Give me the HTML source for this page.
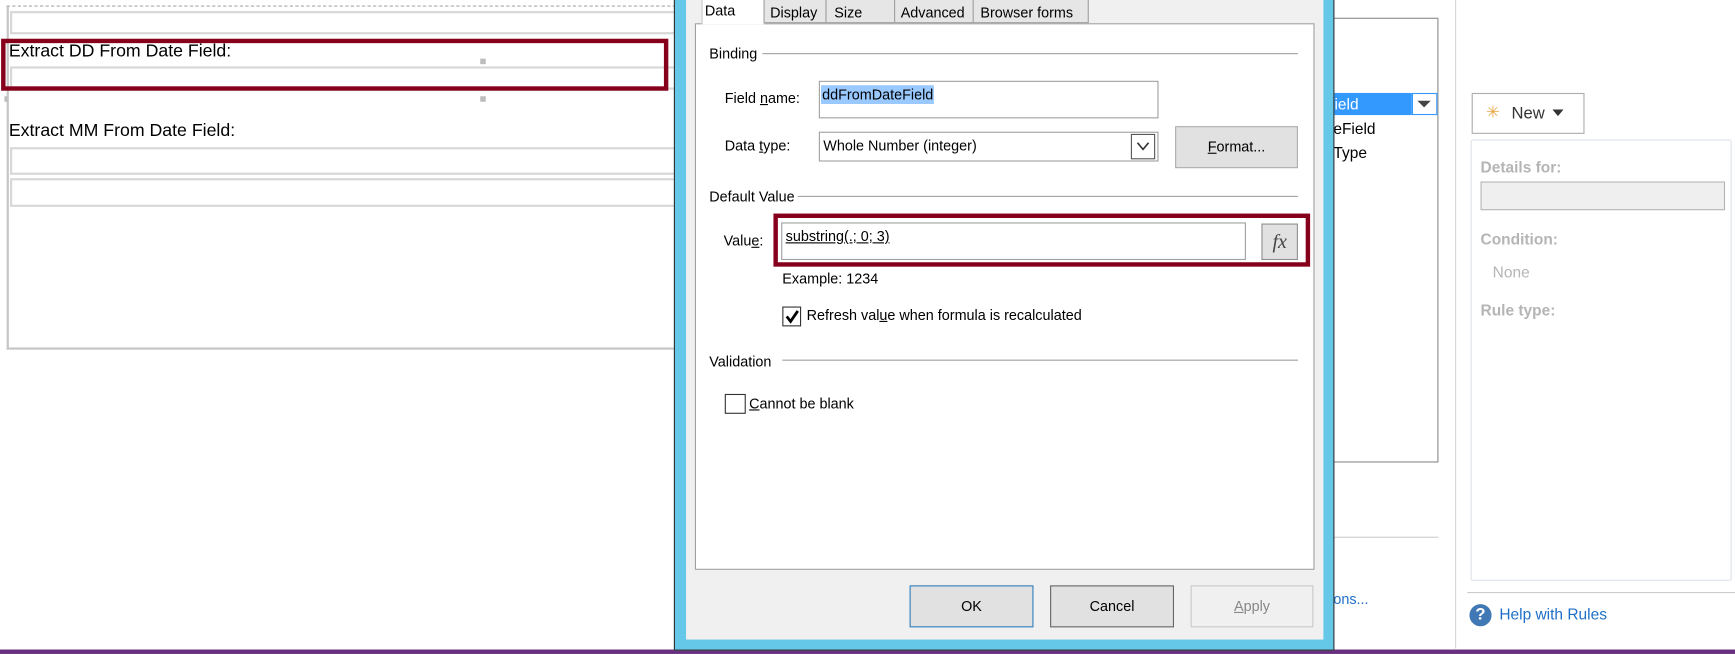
<!DOCTYPE html>
<html><head><meta charset="utf-8"><style>
html,body{margin:0;padding:0;width:1735px;height:654px;overflow:hidden;background:#fff}
#w{position:absolute;left:0;top:0;width:1568px;height:591px;transform:scale(1.10651);transform-origin:0 0;font-family:"Liberation Sans",sans-serif;color:#000}
.a{position:absolute;box-sizing:border-box}
.t{position:absolute;white-space:nowrap;font-size:13px}
.fld{position:absolute;box-sizing:border-box;border:2px solid #d8d8d8;background:#fff}
.hd{position:absolute;width:5px;height:5px;background:#bdbdbd}
.btn{position:absolute;box-sizing:border-box;border:1px solid #adadad;background:#e1e1e1;font-size:13px;text-align:center}
.sec{position:absolute;height:1px;background:#a0a0a0}
u{text-decoration:underline}
</style></head><body><div id="w">
<!-- left form -->
<div class="a" style="left:6px;top:5px;width:610px;height:311px;border:2px solid #c6c6c6;border-top:none"></div>
<div class="a" style="left:6px;top:5px;width:610px;height:0;border-top:1px dashed #aaa"></div>
<div class="fld" style="left:9px;top:10px;width:610px;height:21px"></div>
<div class="t" style="left:8px;top:38px;font-size:16px">Extract DD From Date Field:</div>
<div class="fld" style="left:9px;top:60px;width:610px;height:21px"></div>
<div class="a" style="left:1px;top:35px;width:603px;height:47px;border:4px solid #86001b"></div>
<div class="hd" style="left:434px;top:53px"></div>
<div class="hd" style="left:434px;top:87px"></div>
<div class="hd" style="left:4px;top:87px;width:3px"></div>
<div class="t" style="left:8px;top:110px;font-size:16px">Extract MM From Date Field:</div>
<div class="fld" style="left:9px;top:133px;width:610px;height:25px"></div>
<div class="fld" style="left:9px;top:161px;width:610px;height:26px"></div>

<!-- right background elements -->
<div class="a" style="left:1200px;top:16px;width:100px;height:402px;border:1px solid #8a8a8a;background:#fff"></div>
<div class="a" style="left:1200px;top:84px;width:76px;height:20px;background:#3399ff"></div>
<div class="a" style="left:1276px;top:84px;width:23px;height:20px;border:1px solid #3399ff;background:#fff"></div>
<div class="a" style="left:1281px;top:91px;border-left:6px solid transparent;border-right:6px solid transparent;border-top:6px solid #444"></div>
<div class="t" style="left:1206px;top:86px;color:#fff;font-size:14px">ield</div>
<div class="t" style="left:1205px;top:108px;font-size:14px">eField</div>
<div class="t" style="left:1205px;top:130px;font-size:14px">Type</div>
<div class="a" style="left:1205px;top:485px;width:95px;height:1px;background:#ccc"></div>
<div class="t" style="left:1205px;top:534px;color:#1e6fc8">ons...</div>
<div class="a" style="left:1315px;top:0;width:1px;height:586px;background:#d5d5d5"></div>
<div class="a" style="left:1330px;top:84px;width:102px;height:37px;border:1px solid #adadad;background:#fff"></div>
<div class="t" style="left:1343px;top:92px;font-size:15px;color:#e8a84a">✳</div>
<div class="t" style="left:1366px;top:94px;font-size:15px;color:#333">New</div>
<div class="a" style="left:1403px;top:99px;border-left:5px solid transparent;border-right:5px solid transparent;border-top:6px solid #333"></div>
<div class="a" style="left:1329px;top:126px;width:236px;height:399px;border:1px solid #dde3ea;border-radius:2px"></div>
<div class="t" style="left:1338px;top:143px;font-size:14px;font-weight:bold;color:#b5b5b5">Details for:</div>
<div class="a" style="left:1338px;top:164px;width:221px;height:26px;border:1px solid #b5b5b5;background:#efefef"></div>
<div class="t" style="left:1338px;top:208px;font-size:14px;font-weight:bold;color:#b5b5b5">Condition:</div>
<div class="t" style="left:1349px;top:238px;font-size:14px;color:#b5b5b5">None</div>
<div class="t" style="left:1338px;top:272px;font-size:14px;font-weight:bold;color:#b5b5b5">Rule type:</div>
<div class="a" style="left:1326px;top:535px;width:242px;height:1px;background:#ccc"></div>
<div class="a" style="left:1328px;top:546px;width:20px;height:20px;border-radius:50%;background:#3f78b4;color:#fff;font-weight:bold;font-size:15px;text-align:center;line-height:20px">?</div>
<div class="t" style="left:1355px;top:547px;color:#1e6fc8;font-size:14px">Help with Rules</div>
<div class="a" style="left:0;top:587px;width:1568px;height:4px;background:#68307e"></div>

<!-- dialog -->
<div class="a" style="left:609px;top:-2px;width:597px;height:590px;border:1px solid #333;background:#65c8e8"></div>
<div class="a" style="left:620px;top:-2px;width:576px;height:580px;background:#f0f0f0"></div>
<div class="a" style="left:628px;top:21px;width:560px;height:494px;border:1px solid #a0a0a0;background:#fff"></div>
<div class="a" style="left:634px;top:-2px;width:57px;height:24px;border:1px solid #c8c8c8;border-bottom:none;background:#fff"></div>
<div class="t" style="left:637px;top:2px">Data</div>
<div class="a" style="left:690px;top:-2px;width:57px;height:23px;border:1px solid #a0a0a0;background:#e6e6e6"></div><div class="t" style="left:696px;top:4px">Display</div>
<div class="a" style="left:746px;top:-2px;width:63px;height:23px;border:1px solid #a0a0a0;background:#e6e6e6"></div><div class="t" style="left:754px;top:4px">Size</div>
<div class="a" style="left:808px;top:-2px;width:72px;height:23px;border:1px solid #a0a0a0;background:#e6e6e6"></div><div class="t" style="left:814px;top:4px">Advanced</div>
<div class="a" style="left:879px;top:-2px;width:105px;height:23px;border:1px solid #a0a0a0;background:#e6e6e6"></div><div class="t" style="left:886px;top:4px">Browser forms</div>

<div class="t" style="left:641px;top:41px">Binding</div><div class="sec" style="left:689px;top:48px;width:484px"></div>
<div class="t" style="left:655px;top:81px">Field <u>n</u>ame:</div>
<div class="a" style="left:740px;top:73px;width:307px;height:34px;border:1px solid #a0a0a0;background:#fff"></div>
<div class="t" style="left:742px;top:77px;background:#99c9ff;padding:1px 1px">ddFromDateField</div>
<div class="t" style="left:655px;top:124px">Data <u>t</u>ype:</div>
<div class="a" style="left:740px;top:119px;width:307px;height:27px;border:1px solid #a0a0a0;background:#fff"></div>
<div class="t" style="left:744px;top:124px">Whole Number (integer)</div>
<div class="a" style="left:1022px;top:121px;width:22px;height:23px;border:1px solid #555;background:#fff"></div>
<svg class="a" style="left:1027px;top:127px" width="12" height="10"><path d="M1 2 L6 8 L11 2" fill="none" stroke="#333" stroke-width="1.5"/></svg>
<div class="btn" style="left:1062px;top:114px;width:111px;height:38px;line-height:36px"><u>F</u>ormat...</div>

<div class="t" style="left:641px;top:170px">Default Value</div><div class="sec" style="left:721px;top:177px;width:452px"></div>
<div class="t" style="left:654px;top:210px">Valu<u>e</u>:</div>
<div class="a" style="left:699px;top:193px;width:485px;height:48px;border:4px solid #86001b"></div>
<div class="a" style="left:706px;top:201px;width:420px;height:34px;border:1px solid #a0a0a0;background:#fff"></div>
<div class="t" style="left:710px;top:206px"><u>substring(.; 0; 3)</u></div>
<div class="btn" style="left:1140px;top:202px;width:33px;height:33px;border-color:#909090;font-family:'Liberation Serif',serif;font-style:italic;font-size:18px;line-height:30px;color:#444">fx</div>
<div class="t" style="left:707px;top:244px">Example: 1234</div>
<div class="a" style="left:707px;top:277px;width:17px;height:18px;border:1px solid #333;background:#fff"></div>
<svg class="a" style="left:709px;top:279px" width="14" height="14"><path d="M2 7 L5.5 11.5 L12 2" fill="none" stroke="#000" stroke-width="2.5"/></svg>
<div class="t" style="left:729px;top:277px">Refresh val<u>u</u>e when formula is recalculated</div>
<div class="t" style="left:641px;top:319px">Validation</div><div class="sec" style="left:707px;top:325px;width:466px"></div>
<div class="a" style="left:655px;top:356px;width:19px;height:18px;border:1px solid #333;background:#fff"></div>
<div class="t" style="left:677px;top:357px"><u>C</u>annot be blank</div>

<div class="btn" style="left:822px;top:529px;width:112px;height:38px;line-height:36px;border-color:#2f7fbf">OK</div>
<div class="btn" style="left:949px;top:529px;width:112px;height:38px;line-height:36px;border-color:#666">Cancel</div>
<div class="btn" style="left:1076px;top:529px;width:111px;height:38px;line-height:36px;border-color:#c8c8c8;background:#f0f0f0;color:#888"><u>A</u>pply</div>
</div></body></html>
